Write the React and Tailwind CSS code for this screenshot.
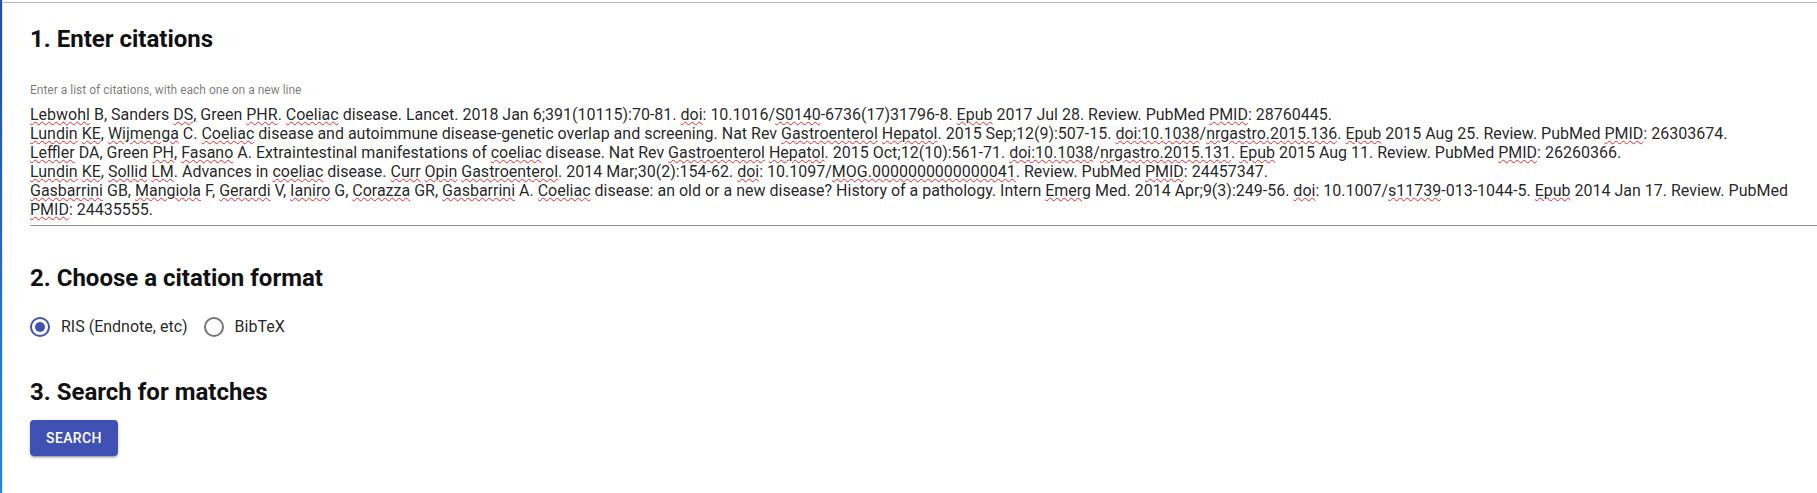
import { useState } from 'react'

// ~word~ marks the spans the browser spell checker flags
const lines = [
  '~Lebwohl~ B, Sanders ~DS~, Green ~PHR~. ~Coeliac~ disease. Lancet. 2018 Jan 6;391(10115):70-81. ~doi~: 10.1016/~S0140~-6736(17)31796-8. ~Epub~ 2017 Jul 28. Review. PubMed ~PMID~: 28760445.',
  '~Lundin~ ~KE~, ~Wijmenga~ C. ~Coeliac~ disease and autoimmune disease-genetic overlap and screening. Nat Rev ~Gastroenterol~ ~Hepatol~. 2015 Sep;12(9):507-15. ~doi:10.1038~/~nrgastro.2015.136~. ~Epub~ 2015 Aug 25. Review. PubMed ~PMID~: 26303674.',
  '~Leffler~ DA, Green ~PH~, ~Fasano~ A. Extraintestinal manifestations of ~coeliac~ disease. Nat Rev ~Gastroenterol~ ~Hepatol~. 2015 Oct;12(10):561-71. ~doi:10.1038~/~nrgastro.2015.131~. ~Epub~ 2015 Aug 11. Review. PubMed ~PMID~: 26260366.',
  '~Lundin~ ~KE~, ~Sollid~ ~LM~. Advances in ~coeliac~ disease. ~Curr~ ~Opin~ ~Gastroenterol~. 2014 Mar;30(2):154-62. ~doi~: 10.1097/~MOG.0000000000000041~. Review. PubMed ~PMID~: 24457347.',
  '~Gasbarrini~ GB, ~Mangiola~ F, ~Gerardi~ V, ~Ianiro~ G, ~Corazza~ GR, ~Gasbarrini~ A. ~Coeliac~ disease: an old or a new disease? History of a pathology. Intern ~Emerg~ Med. 2014 Apr;9(3):249-56. ~doi~: 10.1007/~s11739~-013-1044-5. ~Epub~ 2014 Jan 17. Review. PubMed',
  '~PMID~: 24435555.',
]

function Line({ text }) {
  return (
    <div className="whitespace-pre">
      {text.split('~').map((part, i) =>
        i % 2 === 1 ? (
          <span key={i} className="underline decoration-wavy decoration-[#e8262a] decoration-1 underline-offset-[1px]">
            {part}
          </span>
        ) : (
          <span key={i}>{part}</span>
        )
      )}
    </div>
  )
}

function Radio({ checked, label, onClick }) {
  return (
    <label onClick={onClick} className="flex items-center -ml-[11px] mr-4 cursor-pointer">
      <span className="w-[42px] h-[42px] flex items-center justify-center">
        <svg viewBox="0 0 24 24" className="w-6 h-6">
          <circle cx="12" cy="12" r="9" fill="none" strokeWidth="2" stroke={checked ? '#3f51b5' : 'rgba(0,0,0,0.54)'} />
          {checked && <circle cx="12" cy="12" r="5" fill="#3f51b5" />}
        </svg>
      </span>
      <span className="text-base leading-6 text-black/87">{label}</span>
    </label>
  )
}

function Heading({ children }) {
  return <h2 className="text-2xl leading-8 font-bold text-[#111]">{children}</h2>
}

export default function App() {
  const [format, setFormat] = useState('ris')

  return (
    <div className="flex h-[493px] w-full bg-white overflow-hidden" style={{ fontFamily: 'Roboto, "Liberation Sans", sans-serif' }}>
      <div className="w-[2px] shrink-0 bg-gradient-to-b from-[#1f4fa6] to-[#1a8ae8]" />
      <div className="w-px shrink-0 bg-[#dde4ec]" />
      <div className="flex-1 min-w-0 flex flex-col">
        <div className="h-[2px]" />
        <div className="h-px bg-[#b5b5b5]" />

        <div className="pl-[27px]">
          <div className="mt-5">
            <Heading>1. Enter citations</Heading>
          </div>

          <p className="mt-7 text-xs leading-[14px] text-black/54">Enter a list of citations, with each one on a new line</p>
          <div className="mt-2 pb-[6px] border-b border-[#8f8f8f] text-base leading-[19px] text-black/87">
            {lines.map((l, i) => <Line key={i} text={l} />)}
          </div>

          <div className="mt-9">
            <Heading>2. Choose a citation format</Heading>
          </div>
          <div className="mt-3 flex items-center">
            <Radio checked={format === 'ris'} label="RIS (Endnote, etc)" onClick={() => setFormat('ris')} />
            <Radio checked={format === 'bib'} label="BibTeX" onClick={() => setFormat('bib')} />
          </div>

          <div className="mt-7">
            <Heading>3. Search for matches</Heading>
          </div>
          <button className="mt-3 min-w-16 px-4 py-[6px] rounded bg-[#3f51b5] text-white text-sm leading-6 font-medium uppercase tracking-[0.02857em] shadow-[0_3px_1px_-2px_rgba(0,0,0,0.2),0_2px_2px_0_rgba(0,0,0,0.14),0_1px_5px_0_rgba(0,0,0,0.12)]">
            Search
          </button>
        </div>
      </div>
    </div>
  )
}
